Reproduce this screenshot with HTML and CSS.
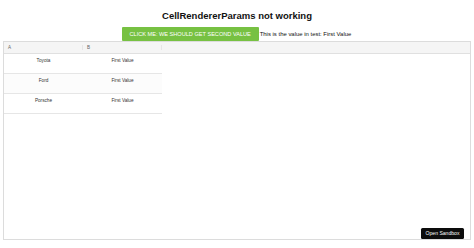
FILE: index.html
```html
<!DOCTYPE html>
<html>
<head>
<meta charset="utf-8">
<link rel="stylesheet" href="styles.css">
</head>
<body>
<h1 class="title">CellRendererParams not working</h1>
<div class="toolbar">
  <button class="btn-green">CLICK ME: WE SHOULD GET SECOND VALUE</button>
  <span class="value">This is the value in test: First Value</span>
</div>
<div class="grid">
  <div class="header">
    <div class="hcell">A</div>
    <div class="hcell">B</div>
  </div>
  <div class="rows">
    <div class="row"><div class="cell">Toyota</div><div class="cell">First Value</div></div>
    <div class="row odd"><div class="cell">Ford</div><div class="cell">First Value</div></div>
    <div class="row"><div class="cell">Porsche</div><div class="cell">First Value</div></div>
  </div>
</div>
<a class="sandbox">Open Sandbox</a>
</body>
</html>
```
FILE: styles.css
```css
html, body {
  margin: 0;
  padding: 0;
  background: #fff;
  font-family: "Liberation Sans", Arial, sans-serif;
  color: #000;
}
body {
  width: 474px;
  height: 248px;
  position: relative;
  overflow: hidden;
}
.title {
  margin: 0;
  padding-top: 10px;
  height: 11px;
  line-height: 11px;
  margin-bottom: 6px;
  font-size: 9.5px;
  font-weight: bold;
  text-align: center;
  color: #111;
}
.toolbar {
  display: flex;
  justify-content: center;
  align-items: center;
  height: 14px;
  padding-left: 0;
}
.btn-green {
  height: 14px;
  width: 137px;
  padding: 0;
  margin: 0 1px 0 0;
  border: none;
  border-radius: 1px;
  background: #77c142;
  color: #fff;
  font-family: "Liberation Sans", Arial, sans-serif;
  font-size: 5.6px;
  line-height: 14px;
  text-align: center;
}
.value {
  font-size: 5.95px;
  line-height: 14px;
  color: #111;
  margin-right: 1px;
}
.grid {
  margin: 0 3px;
  height: 197px;
  border: 1px solid #dcdcdc;
  display: flex;
  flex-direction: column;
}
.header {
  display: flex;
  height: 11px;
  background: #f5f5f5;
  border-bottom: 1px solid #e0e0e0;
}
.hcell {
  width: 75px;
  padding-left: 4px;
  font-size: 4.6px;
  line-height: 11px;
  color: #666;
  position: relative;
}
.hcell::after {
  content: "";
  position: absolute;
  right: 0;
  top: 3px;
  height: 5px;
  width: 1px;
  background: #e6e6e6;
}
.rows {
  display: flex;
  flex-direction: column;
  width: 158px;
}
.row {
  display: flex;
  height: 19px;
  border-bottom: 1px solid #e6e6e6;
}
.row.odd {
  background: #fcfcfc;
}
.cell {
  width: 79px;
  text-align: center;
  font-size: 4.7px;
  line-height: 10px;
  padding-top: 1.5px;
  color: #333;
}
.sandbox {
  position: absolute;
  right: 10px;
  bottom: 9px;
  height: 11px;
  width: 43px;
  background: #0c0c0c;
  color: #fff;
  border-radius: 1.5px;
  font-size: 5.1px;
  line-height: 11px;
  text-align: center;
}
```
